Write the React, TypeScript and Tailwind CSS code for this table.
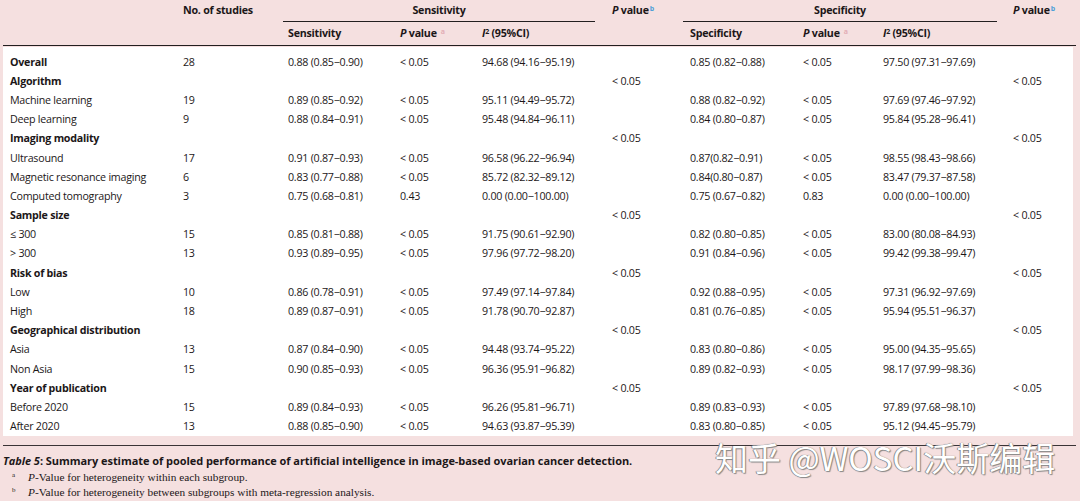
import React from "react";

type Row = {
  label: string;
  group?: boolean;
  n?: string;
  sens?: string;
  sensP?: string;
  sensI2?: string;
  pb?: string;
  spec?: string;
  specP?: string;
  specI2?: string;
  pb2?: string;
};

const L = "< 0.05";

const rows: Row[] = [
  { label: "Overall", group: true, n: "28", sens: "0.88 (0.85−0.90)", sensP: L, sensI2: "94.68 (94.16−95.19)", spec: "0.85 (0.82−0.88)", specP: L, specI2: "97.50 (97.31−97.69)" },
  { label: "Algorithm", group: true, pb: L, pb2: L },
  { label: "Machine learning", n: "19", sens: "0.89 (0.85−0.92)", sensP: L, sensI2: "95.11 (94.49−95.72)", spec: "0.88 (0.82−0.92)", specP: L, specI2: "97.69 (97.46−97.92)" },
  { label: "Deep learning", n: "9", sens: "0.88 (0.84−0.91)", sensP: L, sensI2: "95.48 (94.84−96.11)", spec: "0.84 (0.80−0.87)", specP: L, specI2: "95.84 (95.28−96.41)" },
  { label: "Imaging modality", group: true, pb: L, pb2: L },
  { label: "Ultrasound", n: "17", sens: "0.91 (0.87−0.93)", sensP: L, sensI2: "96.58 (96.22−96.94)", spec: "0.87(0.82−0.91)", specP: L, specI2: "98.55 (98.43−98.66)" },
  { label: "Magnetic resonance imaging", n: "6", sens: "0.83 (0.77−0.88)", sensP: L, sensI2: "85.72 (82.32−89.12)", spec: "0.84(0.80−0.87)", specP: L, specI2: "83.47 (79.37−87.58)" },
  { label: "Computed tomography", n: "3", sens: "0.75 (0.68−0.81)", sensP: "0.43", sensI2: "0.00 (0.00−100.00)", spec: "0.75 (0.67−0.82)", specP: "0.83", specI2: "0.00 (0.00−100.00)" },
  { label: "Sample size", group: true, pb: L, pb2: L },
  { label: "≤ 300", n: "15", sens: "0.85 (0.81−0.88)", sensP: L, sensI2: "91.75 (90.61−92.90)", spec: "0.82 (0.80−0.85)", specP: L, specI2: "83.00 (80.08−84.93)" },
  { label: "> 300", n: "13", sens: "0.93 (0.89−0.95)", sensP: L, sensI2: "97.96 (97.72−98.20)", spec: "0.91 (0.84−0.96)", specP: L, specI2: "99.42 (99.38−99.47)" },
  { label: "Risk of bias", group: true, pb: L, pb2: L },
  { label: "Low", n: "10", sens: "0.86 (0.78−0.91)", sensP: L, sensI2: "97.49 (97.14−97.84)", spec: "0.92 (0.88−0.95)", specP: L, specI2: "97.31 (96.92−97.69)" },
  { label: "High", n: "18", sens: "0.89 (0.87−0.91)", sensP: L, sensI2: "91.78 (90.70−92.87)", spec: "0.81 (0.76−0.85)", specP: L, specI2: "95.94 (95.51−96.37)" },
  { label: "Geographical distribution", group: true, pb: L, pb2: L },
  { label: "Asia", n: "13", sens: "0.87 (0.84−0.90)", sensP: L, sensI2: "94.48 (93.74−95.22)", spec: "0.83 (0.80−0.86)", specP: L, specI2: "95.00 (94.35−95.65)" },
  { label: "Non Asia", n: "15", sens: "0.90 (0.85−0.93)", sensP: L, sensI2: "96.36 (95.91−96.82)", spec: "0.89 (0.82−0.93)", specP: L, specI2: "98.17 (97.99−98.36)" },
  { label: "Year of publication", group: true, pb: L, pb2: L },
  { label: "Before 2020", n: "15", sens: "0.89 (0.84−0.93)", sensP: L, sensI2: "96.26 (95.81−96.71)", spec: "0.89 (0.83−0.93)", specP: L, specI2: "97.89 (97.68−98.10)" },
  { label: "After 2020", n: "13", sens: "0.88 (0.85−0.90)", sensP: L, sensI2: "94.63 (93.87−95.39)", spec: "0.83 (0.80−0.85)", specP: L, specI2: "95.12 (94.45−95.79)" },
];

// column edges: 10, 183, 288, 400, 482, 612, 690, 803, 883, 1013
const cols = "grid grid-cols-[173px_105px_112px_82px_130px_78px_113px_80px_130px_60px]";

function PVal({ mark, markClass }: { mark: string; markClass: string }) {
  return (
    <span>
      <i>P</i> value<sup className={`text-[7px] ${markClass}`}>{mark}</sup>
    </span>
  );
}

function I2() {
  return (
    <span>
      <i>I</i>
      <sup className="text-[7px]">2</sup> (95%CI)
    </span>
  );
}

export default function App() {
  return (
    <div className="relative w-[1080px] h-[501px] overflow-hidden bg-[#f5e0e0] text-[#1c1718] font-['Open_Sans',sans-serif] text-[10.7px] tracking-[-0.25px]">
      {/* header */}
      <div className="ml-[3px] w-[1073px] font-bold">
        <div className={`${cols} pl-[7px] h-[22px]`}>
          <div />
          <div className="pt-[2px]">No. of studies</div>
          <div className="col-span-3 -ml-[5px] mr-[17px] border-b border-[#231f20] text-center pt-[2px]">Sensitivity</div>
          <div className="pt-[2px]">
            <PVal mark="b" markClass="text-[#4f9fd8] ml-[1px]" />
          </div>
          <div className="col-span-3 -ml-[7px] mr-[16px] border-b border-[#231f20] text-center pt-[2px]">Specificity</div>
          <div className="pt-[2px]">
            <PVal mark="b" markClass="text-[#4f9fd8] ml-[1px]" />
          </div>
        </div>
        <div className={`${cols} pl-[7px] h-[24px] items-center border-b-[1.5px] border-[#231f20]`}>
          <div />
          <div />
          <div>Sensitivity</div>
          <div>
            <PVal mark="a" markClass="text-[#e3aeb6] ml-[4px]" />
          </div>
          <div>
            <I2 />
          </div>
          <div />
          <div>Specificity</div>
          <div>
            <PVal mark="a" markClass="text-[#e3aeb6] ml-[4px]" />
          </div>
          <div>
            <I2 />
          </div>
          <div />
        </div>
      </div>

      {/* body */}
      <div className="ml-[3px] w-[1070px] bg-white pt-[5px] pl-[7px] mt-[1px]">
        {rows.map((r) => (
          <div key={r.label} className={`${cols} h-[19.2px] items-center whitespace-nowrap`}>
            <div className={r.group ? "font-bold" : ""}>{r.label}</div>
            <div>{r.n}</div>
            <div>{r.sens}</div>
            <div>{r.sensP}</div>
            <div>{r.sensI2}</div>
            <div>{r.pb}</div>
            <div>{r.spec}</div>
            <div>{r.specP}</div>
            <div>{r.specI2}</div>
            <div>{r.pb2}</div>
          </div>
        ))}
      </div>

      <div className="ml-[3px] w-[1073px] mt-[9px] border-t-[1.5px] border-[#3a3436]" />

      {/* caption */}
      <div className="ml-[3px] mt-[8px] font-bold text-[11px] leading-[14px] tracking-[-0.05px]">
        <i>Table 5</i>: Summary estimate of pooled performance of artificial intelligence in image-based ovarian cancer detection.
      </div>
      <div className="font-['Liberation_Serif',serif] text-[11.3px] leading-[15px] mt-[2px] tracking-normal">
        <div className="flex">
          <span className="w-[28px] pl-[12px] text-[7px] leading-[10px]">a</span>
          <span>
            <i>P</i>-Value for heterogeneity within each subgroup.
          </span>
        </div>
        <div className="flex">
          <span className="w-[28px] pl-[12px] text-[7px] leading-[10px]">b</span>
          <span>
            <i>P</i>-Value for heterogeneity between subgroups with meta-regression analysis.
          </span>
        </div>
      </div>

      {/* watermark */}
      <div className="absolute left-[715px] top-[437px] text-[33px] leading-[40px] tracking-normal text-white font-['Noto_Sans_CJK_SC',sans-serif] [text-shadow:0_0_1px_#6b6b6b,1px_1px_1px_#8a8a8a,-1px_0_0_#9a9a9a]">
        知乎 @WOSCI沃斯编辑
      </div>
    </div>
  );
}
